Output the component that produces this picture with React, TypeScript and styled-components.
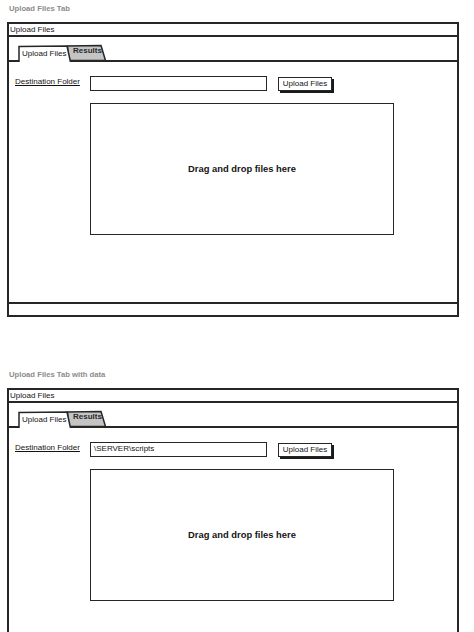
import React from "react";
import styled, { createGlobalStyle } from "styled-components";

const Global = createGlobalStyle`
  html, body { margin: 0; padding: 0; background: #fff; }
  body { font-family: "Liberation Sans", Arial, sans-serif; color: #141414; overflow: hidden; }
`;

const Page = styled.div`
  width: 474px;
  height: 632px;
  overflow: hidden;
`;

const Section = styled.section`
  height: 366px;
`;

const SectionTitle = styled.div`
  height: 22px;
  padding: 4px 0 0 9px;
  box-sizing: border-box;
  font-size: 7.7px;
  font-weight: bold;
  color: #8c8c8c;
`;

const Frame = styled.div`
  margin-left: 7px;
  width: 452px;
  height: 295px;
  box-sizing: border-box;
  border: 2px solid #262626;
  display: flex;
  flex-direction: column;
`;

const TitleBar = styled.div`
  height: 13px;
  box-sizing: border-box;
  border-bottom: 2px solid #262626;
  padding-left: 1px;
  font-size: 8px;
  line-height: 11px;
`;

const TabStrip = styled.div`
  height: 25px;
  box-sizing: border-box;
  border-bottom: 2px solid #262626;
  display: flex;
  align-items: flex-end;
  padding-left: 9px;
`;

const Tab = styled.div<{ $w: number; $active?: boolean }>`
  position: relative;
  width: ${(p) => p.$w}px;
  height: 17px;
  margin-bottom: -2px;
  margin-left: ${(p) => (p.$active ? 0 : -4)}px;
  z-index: ${(p) => (p.$active ? 2 : 1)};
  font-size: 8px;
  font-weight: ${(p) => (p.$active ? "normal" : "bold")};
  color: ${(p) => (p.$active ? "#141414" : "#2a2a2a")};
`;

const TabShape = styled.svg`
  position: absolute;
  inset: 0;
  overflow: visible;
`;

const TabLabel = styled.span<{ $top: number; $left: number }>`
  position: absolute;
  top: ${(p) => p.$top}px;
  left: ${(p) => p.$left}px;
  white-space: nowrap;
`;

const Content = styled.div`
  flex: 1;
  padding: 14px 0 0 6px;
`;

const FieldRow = styled.div`
  display: flex;
  align-items: center;
  height: 15px;
`;

const Label = styled.div`
  width: 75px;
  font-size: 8px;
  text-decoration: underline;
  margin-top: -4px;
`;

const Input = styled.div`
  width: 177px;
  height: 15px;
  box-sizing: border-box;
  border: 1.5px solid #262626;
  font-size: 8px;
  line-height: 12px;
  padding-left: 3px;
`;

const Button = styled.div`
  margin-left: 11px;
  width: 54px;
  height: 14px;
  box-sizing: border-box;
  border: 1px solid #262626;
  box-shadow: 2px 2px 0 #1a1a1a;
  font-size: 8px;
  line-height: 12px;
  text-align: center;
`;

const DropZone = styled.div`
  margin: 12px 0 0 75px;
  width: 304px;
  height: 132px;
  box-sizing: border-box;
  border: 1.5px solid #262626;
  display: flex;
  align-items: center;
  justify-content: center;
  padding-bottom: 2px;
  font-size: 9.4px;
  font-weight: bold;
  color: #141414;
`;

const StatusBar = styled.div`
  height: 13px;
  box-sizing: border-box;
  border-top: 2px solid #262626;
`;

function Mockup({ title, folder }: { title: string; folder: string }) {
  return (
    <Section>
      <SectionTitle>{title}</SectionTitle>
      <Frame>
        <TitleBar>Upload Files</TitleBar>
        <TabStrip>
          <Tab $w={53} $active>
            <TabShape width="53" height="17" viewBox="0 0 53 17">
              <polygon points="1,17 1,1.5 49,1 52.5,17" fill="#fff" />
              <polyline points="1,17 1,1.5 49,1 52.5,17" fill="none" stroke="#262626" strokeWidth="1.5" />
            </TabShape>
            <TabLabel $top={4} $left={4}>Upload Files</TabLabel>
          </Tab>
          <Tab $w={40}>
            <TabShape width="40" height="17" viewBox="0 0 40 17">
              <polygon points="1.5,15.5 0.5,1 34,0.5 38.5,15.5" fill="#c4c4c4" stroke="#262626" strokeWidth="1.5" />
            </TabShape>
            <TabLabel $top={1} $left={6}>Results</TabLabel>
          </Tab>
        </TabStrip>
        <Content>
          <FieldRow>
            <Label>Destination Folder</Label>
            <Input>{folder}</Input>
            <Button>Upload Files</Button>
          </FieldRow>
          <DropZone>Drag and drop files here</DropZone>
        </Content>
        <StatusBar />
      </Frame>
    </Section>
  );
}

export default function App() {
  return (
    <Page>
      <Global />
      <Mockup title="Upload Files Tab" folder="" />
      <Mockup title="Upload Files Tab with data" folder="\SERVER\scripts" />
    </Page>
  );
}
